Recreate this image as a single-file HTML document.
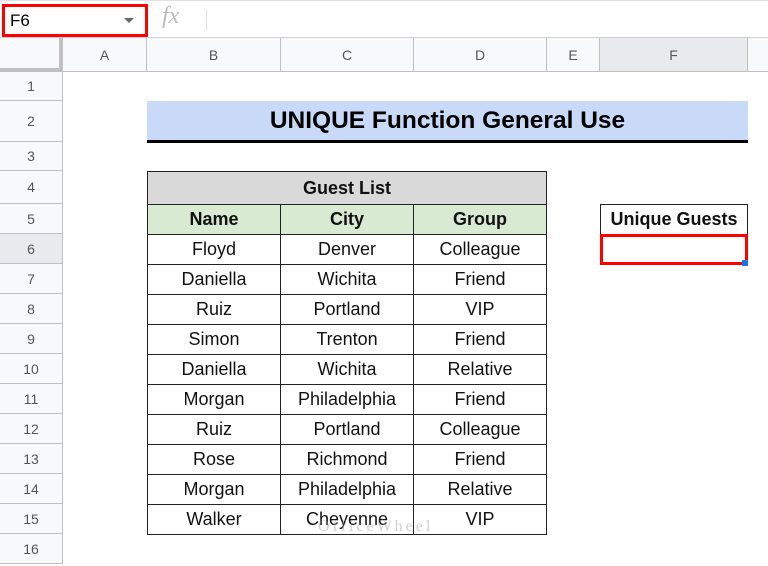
<!DOCTYPE html><html><head><style>
*{margin:0;padding:0;box-sizing:border-box}
body{width:768px;height:566px;overflow:hidden;background:#fff;font-family:"Liberation Sans",Arial,sans-serif;position:relative}
.a{position:absolute}
.ch{position:absolute;top:38px;height:34px;background:#f8f9fa;border-right:1px solid #c0c0c0;border-bottom:1px solid #c0c0c0;color:#555;font-size:14px;text-align:center;line-height:34px}
.rh{position:absolute;left:0;width:63px;background:#f8f9fa;border-right:1px solid #c0c0c0;border-bottom:1px solid #c0c0c0;color:#555;font-size:14px;text-align:center}
.c{position:absolute;text-align:center;font-size:18px;color:#111;border:1px solid #222;line-height:29px}
</style></head><body>
<div class="a" style="left:0;top:0;width:768px;height:38px;border-bottom:1px solid #d0d0d0;border-top:1px solid #e0e0e0"></div>
<div class="a" style="left:2px;top:4px;width:146px;height:33px;border:3px solid #f00;font-size:17px;line-height:27px;padding-left:5px">F6</div>
<div class="a" style="left:124px;top:18px;width:0;height:0;border-left:5px solid transparent;border-right:5px solid transparent;border-top:5px solid #666"></div>
<div class="a" style="left:162px;top:3px;font-family:'Liberation Serif',serif;font-style:italic;font-size:24px;color:#bbb">fx</div>
<div class="a" style="left:206px;top:10px;width:1px;height:20px;background:#ddd"></div>
<div class="a" style="left:0;top:38px;width:63px;height:34px;background:#f8f9fa;border-right:4px solid #c0c0c0;border-bottom:4px solid #c0c0c0"></div>
<div class="ch" style="left:63px;width:84px">A</div>
<div class="ch" style="left:147px;width:134px">B</div>
<div class="ch" style="left:281px;width:133px">C</div>
<div class="ch" style="left:414px;width:133px">D</div>
<div class="ch" style="left:547px;width:53px">E</div>
<div class="ch" style="left:600px;width:148px;background:#e8eaed">F</div>
<div class="ch" style="left:748px;width:30px"></div>
<div class="rh" style="top:72px;height:29px;line-height:29px">1</div>
<div class="rh" style="top:101px;height:41px;line-height:41px">2</div>
<div class="rh" style="top:142px;height:29px;line-height:29px">3</div>
<div class="rh" style="top:171px;height:33px;line-height:33px">4</div>
<div class="rh" style="top:204px;height:30px;line-height:30px">5</div>
<div class="rh" style="top:234px;height:30px;line-height:30px;background:#e8eaed">6</div>
<div class="rh" style="top:264px;height:30px;line-height:30px">7</div>
<div class="rh" style="top:294px;height:30px;line-height:30px">8</div>
<div class="rh" style="top:324px;height:30px;line-height:30px">9</div>
<div class="rh" style="top:354px;height:30px;line-height:30px">10</div>
<div class="rh" style="top:384px;height:30px;line-height:30px">11</div>
<div class="rh" style="top:414px;height:30px;line-height:30px">12</div>
<div class="rh" style="top:444px;height:30px;line-height:30px">13</div>
<div class="rh" style="top:474px;height:30px;line-height:30px">14</div>
<div class="rh" style="top:504px;height:30px;line-height:30px">15</div>
<div class="rh" style="top:534px;height:30px;line-height:30px">16</div>
<div class="a" style="left:147px;top:101px;width:601px;height:42px;background:#c9daf8;border-bottom:3px solid #000;text-align:center;font-weight:bold;font-size:24.5px;line-height:40px;color:#000">UNIQUE Function General Use</div>
<div class="c" style="left:147px;top:171px;width:400px;height:34px;background:#d9d9d9;font-weight:bold;line-height:32px">Guest List</div>
<div class="c" style="left:147px;top:204px;width:134px;height:31px;background:#d9ead3;font-weight:bold">Name</div>
<div class="c" style="left:280px;top:204px;width:134px;height:31px;background:#d9ead3;font-weight:bold">City</div>
<div class="c" style="left:413px;top:204px;width:134px;height:31px;background:#d9ead3;font-weight:bold">Group</div>
<div id="rows"></div>
<div class="c" style="left:600px;top:204px;width:148px;height:31px;font-weight:bold">Unique Guests</div>
<div class="a" style="left:600px;top:234px;width:148px;height:31px;border:3px solid #f00"></div>
<div class="a" style="left:742px;top:260px;width:6px;height:6px;background:#1a73e8"></div>
<div class="a" style="left:318px;top:518px;font-family:'Liberation Serif',serif;font-size:16px;letter-spacing:3px;color:rgba(150,150,160,.45)">OfficeWheel</div>
<script>
var d=[["Floyd","Denver","Colleague"],["Daniella","Wichita","Friend"],["Ruiz","Portland","VIP"],["Simon","Trenton","Friend"],["Daniella","Wichita","Relative"],["Morgan","Philadelphia","Friend"],["Ruiz","Portland","Colleague"],["Rose","Richmond","Friend"],["Morgan","Philadelphia","Relative"],["Walker","Cheyenne","VIP"]];
var h="",x=[147,280,413];
d.forEach(function(r,i){r.forEach(function(t,j){h+='<div class="c" style="left:'+x[j]+'px;top:'+(234+i*30)+'px;width:134px;height:31px">'+t+'</div>';});});
document.getElementById("rows").outerHTML=h;
</script>
</body></html>
